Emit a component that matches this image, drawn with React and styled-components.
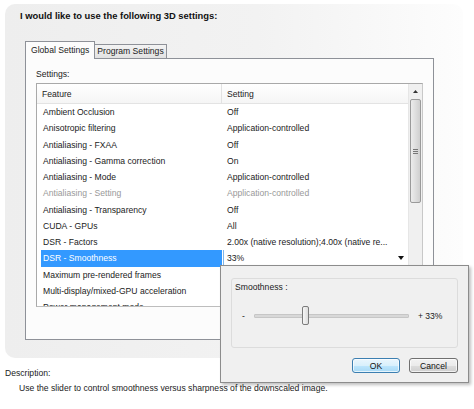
import styled, { createGlobalStyle } from 'styled-components'

const GlobalStyle = createGlobalStyle`
  body {
    margin: 0;
    background: #fff;
    font-family: "Liberation Sans", Arial, sans-serif;
    font-size: 8.6px;
    color: #1b1b1b;
  }
`

const rows = [
  { feature: 'Ambient Occlusion', setting: 'Off' },
  { feature: 'Anisotropic filtering', setting: 'Application-controlled' },
  { feature: 'Antialiasing - FXAA', setting: 'Off' },
  { feature: 'Antialiasing - Gamma correction', setting: 'On' },
  { feature: 'Antialiasing - Mode', setting: 'Application-controlled' },
  { feature: 'Antialiasing - Setting', setting: 'Application-controlled', disabled: true },
  { feature: 'Antialiasing - Transparency', setting: 'Off' },
  { feature: 'CUDA - GPUs', setting: 'All' },
  { feature: 'DSR - Factors', setting: '2.00x (native resolution);4.00x (native re...' },
  { feature: 'DSR - Smoothness', setting: '33%', selected: true },
  { feature: 'Maximum pre-rendered frames', setting: '' },
  { feature: 'Multi-display/mixed-GPU acceleration', setting: '' },
  { feature: 'Power management mode', setting: '' },
]

export default function App() {
  return (
    <Page>
      <GlobalStyle />
      <Panel>
        <Title>I would like to use the following 3D settings:</Title>
        <Tabs>
          <Tab $active>Global Settings</Tab>
          <Tab>Program Settings</Tab>
        </Tabs>
        <TabBody>
          <Label>Settings:</Label>
          <ListBox>
            <Table>
              <HeaderRow>
                <HeadCell>Feature</HeadCell>
                <HeadCell $last>Setting</HeadCell>
              </HeaderRow>
              {rows.map((row, index) => (
                <Row key={index} $disabled={row.disabled}>
                  <FeatureCell $selected={row.selected}>{row.feature}</FeatureCell>
                  {row.selected ? (
                    <Combo>
                      {row.setting}
                      <svg width="6" height="4" viewBox="0 0 6 4">
                        <path d="M0 0H6L3 4Z" fill="#111" />
                      </svg>
                    </Combo>
                  ) : (
                    <SettingCell>{row.setting}</SettingCell>
                  )}
                </Row>
              ))}
            </Table>
            <Scrollbar>
              <ScrollArrow>
                <svg width="5" height="3" viewBox="0 0 5 3">
                  <path d="M0 3H5L2.5 0Z" fill="#333" />
                </svg>
              </ScrollArrow>
              <Thumb>
                <Grip />
              </Thumb>
            </Scrollbar>
          </ListBox>
        </TabBody>
      </Panel>
      <DescLabel>Description:</DescLabel>
      <DescText>Use the slider to control smoothness versus sharpness of the downscaled image.</DescText>

      <Popup>
        <Group>
          <GroupTitle>Smoothness :</GroupTitle>
          <SliderRow>
            <span>-</span>
            <Track>
              <Knob style={{ left: '33%' }} />
            </Track>
            <span>+ 33%</span>
          </SliderRow>
        </Group>
        <Buttons>
          <Button $primary>OK</Button>
          <Button>Cancel</Button>
        </Buttons>
      </Popup>
    </Page>
  )
}

const Page = styled.div`
  position: relative;
  padding: 4px 0 0 5px;
  height: 405px;
`
const Panel = styled.div`
  width: 458px;
  height: 354px;
  box-sizing: border-box;
  border-radius: 10px;
  background: linear-gradient(to right, #eeeeee 0%, #f2f2f2 55%, #f9f9f9 85%, #fdfdfd 100%);
  padding: 6px 0 0 15px;
`
const Title = styled.div`
  font-weight: bold;
  font-size: 9.4px;
  line-height: 12px;
  color: #111;
`
const Tabs = styled.div`
  display: flex;
  align-items: flex-end;
  margin: 18px 0 0 5px;
  height: 18px;
`
const Tab = styled.div`
  box-sizing: border-box;
  height: ${(p) => (p.$active ? '18px' : '14px')};
  padding: 0 ${(p) => (p.$active ? '5px' : '2px')};
  line-height: ${(p) => (p.$active ? '17px' : '13px')};
  border: 1px solid #8e9198;
  border-bottom: none;
  border-left: ${(p) => (p.$active ? '1px solid #8e9198' : 'none')};
  background: ${(p) => (p.$active ? '#fcfcfc' : 'linear-gradient(#f3f3f3, #e2e2e2)')};
  margin-bottom: ${(p) => (p.$active ? '-1px' : '0')};
  position: relative;
  z-index: ${(p) => (p.$active ? 1 : 0)};
`
const TabBody = styled.div`
  box-sizing: border-box;
  margin-left: 5px;
  width: 409px;
  height: 282px;
  border: 1px solid #8e9198;
  background: #fcfcfc;
  padding: 9px 0 0 10px;
`
const Label = styled.div`
  line-height: 12px;
`
const ListBox = styled.div`
  display: flex;
  box-sizing: border-box;
  margin-top: 3px;
  width: 387px;
  height: 224px;
  border: 1px solid #8b8b8b;
  border-color: #a9a9a9 #c8c8c8 #bdbdbd #a9a9a9;
  background: #fff;
  overflow: hidden;
`
const Table = styled.div`
  flex: 1;
  overflow: hidden;
`
const HeaderRow = styled.div`
  display: grid;
  grid-template-columns: 185px 1fr;
  height: 20px;
  box-sizing: border-box;
  border-bottom: 1px solid #e3e3e3;
  background: linear-gradient(#ffffff, #f5f5f5);
`
const HeadCell = styled.div`
  padding-left: 5px;
  line-height: 20px;
  border-right: ${(p) => (p.$last ? 'none' : '1px solid #e2e2e2')};
`
const Row = styled.div`
  display: grid;
  grid-template-columns: 185px 1fr;
  height: 16.25px;
  line-height: 16px;
  color: ${(p) => (p.$disabled ? '#999' : 'inherit')};
`
const FeatureCell = styled.div`
  margin-left: 4px;
  padding-left: 2px;
  background: ${(p) => (p.$selected ? '#3399ff' : 'transparent')};
  color: ${(p) => (p.$selected ? '#fff' : 'inherit')};
  white-space: nowrap;
`
const SettingCell = styled.div`
  padding-left: 5px;
  white-space: nowrap;
`
const Combo = styled.div`
  display: flex;
  align-items: center;
  justify-content: space-between;
  margin-left: 1px;
  padding: 0 4px 0 3px;
  border-left: 1px solid #7fb6ea;
  background: #fff;
`
const Scrollbar = styled.div`
  width: 13px;
  background: #f0f0f0;
  border-left: 1px solid #e6e6e6;
  display: flex;
  flex-direction: column;
  align-items: center;
`
const ScrollArrow = styled.div`
  height: 15px;
  display: flex;
  align-items: center;
  justify-content: center;
`
const Thumb = styled.div`
  box-sizing: border-box;
  width: 11px;
  height: 104px;
  border: 1px solid #9a9a9a;
  border-radius: 2px;
  background: linear-gradient(to right, #ececec, #dedede 50%, #cfcfcf);
  display: flex;
  align-items: center;
  justify-content: center;
`
const Grip = styled.div`
  width: 5px;
  height: 5px;
  background: repeating-linear-gradient(#777 0 1px, transparent 1px 2px);
`
const DescLabel = styled.div`
  margin-top: 9px;
  line-height: 12px;
`
const DescText = styled.div`
  margin: 3px 0 0 14px;
  line-height: 12px;
`
const Popup = styled.div`
  position: absolute;
  left: 220px;
  top: 265px;
  width: 249px;
  height: 118px;
  box-sizing: border-box;
  background: #f0f0f0;
  border: 1px solid #8c8c8c;
  box-shadow: 2px 2px 3px rgba(0, 0, 0, 0.25);
  padding: 12px 10px 0 10px;
`
const Group = styled.div`
  box-sizing: border-box;
  height: 70px;
  border: 1px solid #dcdcdc;
  border-radius: 3px;
  padding: 2px 0 0 3px;
`
const GroupTitle = styled.div`
  line-height: 12px;
`
const SliderRow = styled.div`
  display: flex;
  align-items: center;
  gap: 9px;
  margin-top: 18px;
  padding-left: 7px;
`
const Track = styled.div`
  position: relative;
  width: 153px;
  height: 2px;
  background: #d8d8d8;
  border: 1px solid #c6c6c6;
  border-radius: 1px;
`
const Knob = styled.div`
  position: absolute;
  top: -9px;
  margin-left: -3px;
  width: 7px;
  height: 19px;
  box-sizing: border-box;
  border: 1px solid #7c7c7c;
  border-radius: 2px;
  background: linear-gradient(to right, #f7f7f7, #dddddd);
`
const Buttons = styled.div`
  display: flex;
  justify-content: flex-end;
  gap: 9px;
  margin-top: 10px;
`
const Button = styled.button`
  box-sizing: border-box;
  width: ${(p) => (p.$primary ? '48px' : '49px')};
  height: 15px;
  padding: 0;
  font: inherit;
  color: #111;
  border-radius: 3px;
  border: 1px solid ${(p) => (p.$primary ? '#3c7fb1' : '#707070')};
  background: ${(p) => (p.$primary ? 'linear-gradient(#eaf6fd 0%, #d9f0fc 50%, #bee6fd 51%, #a7d9f5 100%)' : 'linear-gradient(#f2f2f2 0%, #ebebeb 50%, #dddddd 51%, #cfcfcf 100%)')};
  box-shadow: inset 0 0 0 1px rgba(255, 255, 255, 0.7);
`
